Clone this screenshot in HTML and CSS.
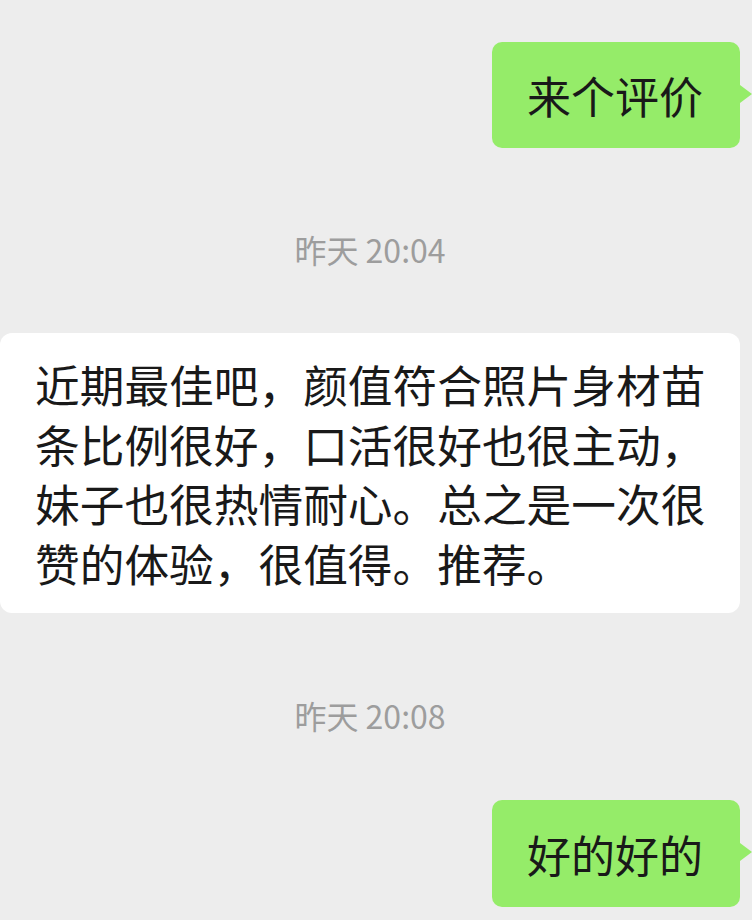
FILE: index.html
```html
<!DOCTYPE html>
<html lang="zh-CN">
<head>
<meta charset="utf-8">
<title>Chat</title>
<link rel="stylesheet" href="styles.css">
</head>
<body>
<div class="chat">
  <div class="row row-me first">
    <div class="bubble bubble-me">来个评价</div>
  </div>
  <div class="time t1">昨天 20:04</div>
  <div class="row row-other">
    <div class="bubble bubble-other">近期最佳吧，颜值符合照片身材苗条比例很好，口活很好也很主动，妹子也很热情耐心。总之是一次很赞的体验，很值得。推荐。</div>
  </div>
  <div class="time t2">昨天 20:08</div>
  <div class="row row-me last">
    <div class="bubble bubble-me">好的好的</div>
  </div>
</div>
</body>
</html>
```

FILE: styles.css
```css
html, body {
  margin: 0;
  padding: 0;
  background: #ededed;
}
body {
  font-family: "Noto Sans CJK SC", "Noto Sans", sans-serif;
  color: #191919;
  width: 752px;
  height: 920px;
  overflow: hidden;
}
.chat {
  display: flex;
  flex-direction: column;
}
.row {
  display: flex;
}
.row-me {
  justify-content: flex-end;
  padding-right: 12px;
}
.row-other {
  justify-content: flex-start;
}
.first { margin-top: 42px; }
.bubble {
  position: relative;
  box-sizing: border-box;
}
.bubble-me {
  background: #95ec69;
  border-radius: 10px;
  width: 248px;
  height: 106px;
  padding-left: 35px;
  display: flex;
  align-items: center;
  font-size: 44px;
  line-height: 60px;
  padding-top: 0;
}
.last .bubble-me { height: 107px; }
.bubble-me::after {
  content: "";
  position: absolute;
  right: -12px;
  top: 43px;
  border-left: 12px solid #95ec69;
  border-top: 9px solid transparent;
  border-bottom: 9px solid transparent;
}
.time {
  text-align: center;
  font-size: 32px;
  line-height: 40px;
  color: #9d9d9d;
  padding-right: 12px;
}
.t1 { margin-top: 81px; }
.t2 { margin-top: 82px; }
.row-other { margin-top: 64px; }
.last { margin-top: 65px; }
.bubble-other {
  background: #ffffff;
  border-radius: 12px;
  width: 740px;
  height: 280px;
  padding: 21px 20px 20px 35px;
  font-size: 44.7px;
  line-height: 59.7px;
}
```
